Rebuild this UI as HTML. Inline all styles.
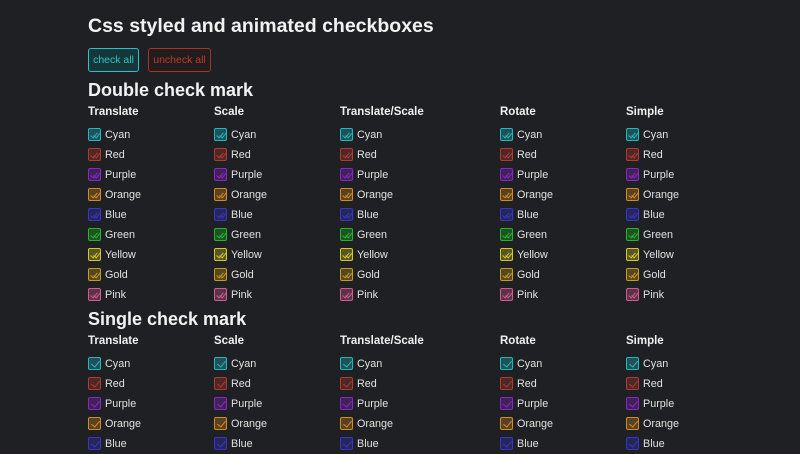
<!DOCTYPE html>
<html><head><meta charset="utf-8"><style>
*{margin:0;padding:0;box-sizing:border-box}
body{width:800px;height:450px;overflow:hidden;background:#1f2023;color:#e6e6e6;font-family:"Liberation Sans",sans-serif;position:relative}
h1{position:absolute;left:88px;top:15px;font-size:19.5px;font-weight:bold;color:#f2f2f2}
.btn{position:absolute;top:48px;height:24px;border:1px solid;border-radius:3px;font-size:10.5px;line-height:22px;text-align:center}
.b1{left:88px;width:51px;color:#2cc3c8;border-color:#2cc3c8;background:#17363a}
.b2{left:148px;width:63px;color:#c0392b;border-color:#a83228;background:#221d1d}
h2{position:absolute;left:88px;font-size:18px;font-weight:bold;color:#f2f2f2}
.col{position:absolute;width:150px}
.col h3{font-size:11.5px;font-weight:bold;color:#f0f0f0;height:22px;line-height:18px}
.col p{height:20px;font-size:10.8px;line-height:20px;position:relative;padding-left:17px;color:#e2e2e2}
.col p i{position:absolute;left:0;top:3px;width:13px;height:13px;border:1px solid var(--c);border-radius:2px;background:color-mix(in srgb,var(--c) 32%,#1f2023)}
.col p i::after,.d p i::before{content:"";position:absolute;left:4px;top:1px;width:3px;height:7px;border-right:1.3px solid var(--c);border-bottom:1.3px solid var(--c);transform:rotate(40deg)}
.d p i::after{left:6px;top:2px;height:6px}
.d p i::before{left:3px;top:2px;height:6px}
.s p i::after{left:4px;top:1px;width:4px;height:7px}
.cy{--c:#22b8c2}.re{--c:#b23a2e}.pu{--c:#8a26c8}.or{--c:#d58a22}.bl{--c:#3636c8}.gr{--c:#22b82a}.ye{--c:#d4c82a}.go{--c:#c99a1c}.pi{--c:#d45a90}
</style></head><body>
<h1>Css styled and animated checkboxes</h1>
<div class="btn b1">check all</div><div class="btn b2">uncheck all</div>
<h2 style="top:80px">Double check mark</h2>
<h2 style="top:309px">Single check mark</h2>

<div class="col d" style="left:88px;top:103px"><h3>Translate</h3><p><i class="cy"></i>Cyan</p><p><i class="re"></i>Red</p><p><i class="pu"></i>Purple</p><p><i class="or"></i>Orange</p><p><i class="bl"></i>Blue</p><p><i class="gr"></i>Green</p><p><i class="ye"></i>Yellow</p><p><i class="go"></i>Gold</p><p><i class="pi"></i>Pink</p></div>
<div class="col d" style="left:214px;top:103px"><h3>Scale</h3><p><i class="cy"></i>Cyan</p><p><i class="re"></i>Red</p><p><i class="pu"></i>Purple</p><p><i class="or"></i>Orange</p><p><i class="bl"></i>Blue</p><p><i class="gr"></i>Green</p><p><i class="ye"></i>Yellow</p><p><i class="go"></i>Gold</p><p><i class="pi"></i>Pink</p></div>
<div class="col d" style="left:340px;top:103px"><h3>Translate/Scale</h3><p><i class="cy"></i>Cyan</p><p><i class="re"></i>Red</p><p><i class="pu"></i>Purple</p><p><i class="or"></i>Orange</p><p><i class="bl"></i>Blue</p><p><i class="gr"></i>Green</p><p><i class="ye"></i>Yellow</p><p><i class="go"></i>Gold</p><p><i class="pi"></i>Pink</p></div>
<div class="col d" style="left:500px;top:103px"><h3>Rotate</h3><p><i class="cy"></i>Cyan</p><p><i class="re"></i>Red</p><p><i class="pu"></i>Purple</p><p><i class="or"></i>Orange</p><p><i class="bl"></i>Blue</p><p><i class="gr"></i>Green</p><p><i class="ye"></i>Yellow</p><p><i class="go"></i>Gold</p><p><i class="pi"></i>Pink</p></div>
<div class="col d" style="left:626px;top:103px"><h3>Simple</h3><p><i class="cy"></i>Cyan</p><p><i class="re"></i>Red</p><p><i class="pu"></i>Purple</p><p><i class="or"></i>Orange</p><p><i class="bl"></i>Blue</p><p><i class="gr"></i>Green</p><p><i class="ye"></i>Yellow</p><p><i class="go"></i>Gold</p><p><i class="pi"></i>Pink</p></div>

<div class="col s" style="left:88px;top:332px"><h3>Translate</h3><p><i class="cy"></i>Cyan</p><p><i class="re"></i>Red</p><p><i class="pu"></i>Purple</p><p><i class="or"></i>Orange</p><p><i class="bl"></i>Blue</p></div>
<div class="col s" style="left:214px;top:332px"><h3>Scale</h3><p><i class="cy"></i>Cyan</p><p><i class="re"></i>Red</p><p><i class="pu"></i>Purple</p><p><i class="or"></i>Orange</p><p><i class="bl"></i>Blue</p></div>
<div class="col s" style="left:340px;top:332px"><h3>Translate/Scale</h3><p><i class="cy"></i>Cyan</p><p><i class="re"></i>Red</p><p><i class="pu"></i>Purple</p><p><i class="or"></i>Orange</p><p><i class="bl"></i>Blue</p></div>
<div class="col s" style="left:500px;top:332px"><h3>Rotate</h3><p><i class="cy"></i>Cyan</p><p><i class="re"></i>Red</p><p><i class="pu"></i>Purple</p><p><i class="or"></i>Orange</p><p><i class="bl"></i>Blue</p></div>
<div class="col s" style="left:626px;top:332px"><h3>Simple</h3><p><i class="cy"></i>Cyan</p><p><i class="re"></i>Red</p><p><i class="pu"></i>Purple</p><p><i class="or"></i>Orange</p><p><i class="bl"></i>Blue</p></div>
</body></html>
